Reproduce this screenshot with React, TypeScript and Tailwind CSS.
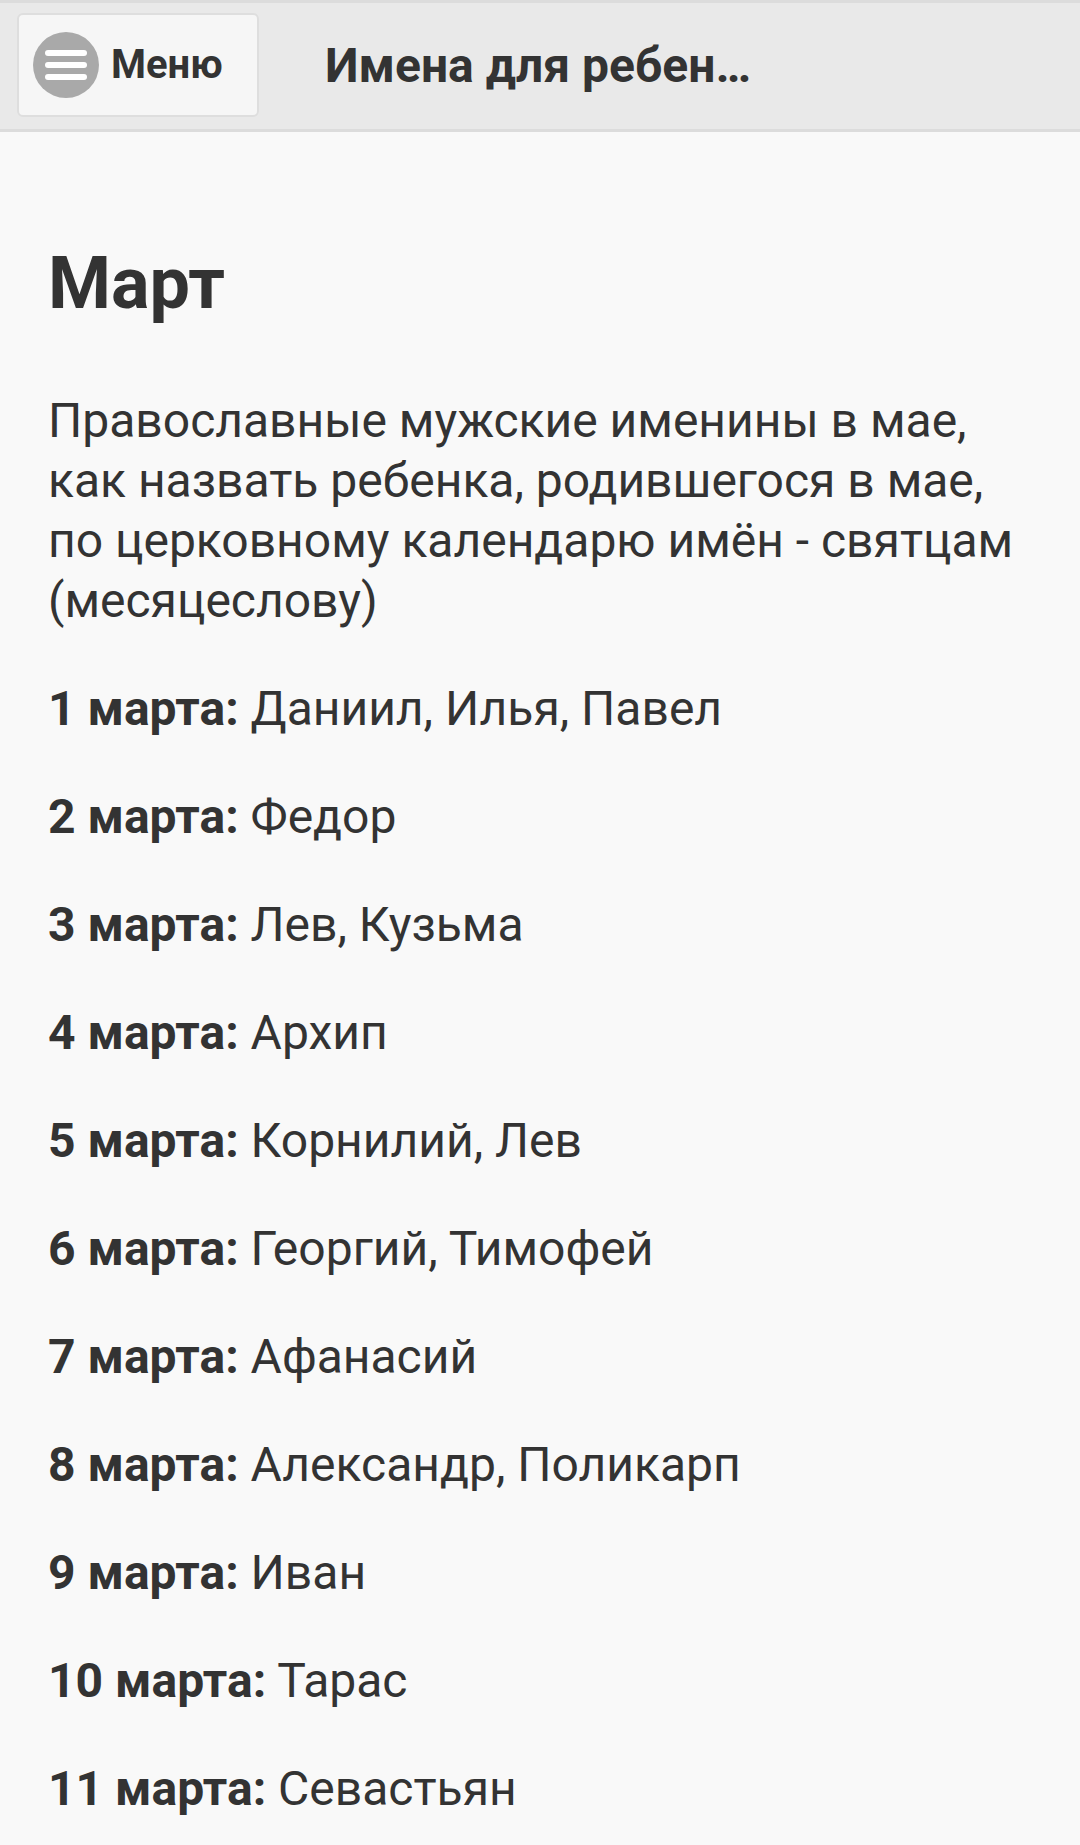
import React from 'react';

const days: { day: number; names: string }[] = [
  { day: 1, names: 'Даниил, Илья, Павел' },
  { day: 2, names: 'Федор' },
  { day: 3, names: 'Лев, Кузьма' },
  { day: 4, names: 'Архип' },
  { day: 5, names: 'Корнилий, Лев' },
  { day: 6, names: 'Георгий, Тимофей' },
  { day: 7, names: 'Афанасий' },
  { day: 8, names: 'Александр, Поликарп' },
  { day: 9, names: 'Иван' },
  { day: 10, names: 'Тарас' },
  { day: 11, names: 'Севастьян' },
];

const MenuIcon: React.FC = () => (
  <div className="w-[66px] h-[66px] rounded-full bg-[#a9a9a9] flex flex-col items-center justify-center gap-[6px] shrink-0">
    <span className="block w-[42px] h-[6px] rounded-full bg-white" />
    <span className="block w-[42px] h-[6px] rounded-full bg-white" />
    <span className="block w-[42px] h-[6px] rounded-full bg-white" />
  </div>
);

const App: React.FC = () => {
  return (
    <div className="min-h-screen bg-[#f9f9f9] text-[#333333]" style={{ fontFamily: 'Roboto, "Noto Sans", sans-serif' }}>
      <header className="h-[132px] bg-[#e9e9e9] border-t-[3px] border-b-[3px] border-[#dcdcdc] flex items-center pl-[17px]">
        <button className="w-[242px] h-[104px] mt-[-2px] bg-[#f6f6f6] border-2 border-[#dedede] rounded-[6px] flex items-center gap-[12px] pl-[14px]">
          <MenuIcon />
          <span className="text-[40px] font-bold leading-none text-[#333333]">Меню</span>
        </button>
        <h2 className="ml-[66px] text-[48px] font-bold leading-none whitespace-nowrap">Имена для ребен…</h2>
      </header>

      <main className="px-[48px] pb-[40px]">
        <h1 className="mt-[109px] text-[72px] font-bold leading-[1.2]">Март</h1>
        <p className="mt-[64px] text-[48px] leading-[60px]">
          Православные мужские именины в мае, как назвать ребенка, родившегося в мае, по церковному календарю имён - святцам (месяцеслову)
        </p>
        <div className="mt-[48px] flex flex-col gap-[48px]">
          {days.map(d => (
            <p key={d.day} className="text-[48px] leading-[60px]">
              <span className="font-bold">{d.day} марта:</span> {d.names}
            </p>
          ))}
        </div>
      </main>
    </div>
  );
};

export default App;
